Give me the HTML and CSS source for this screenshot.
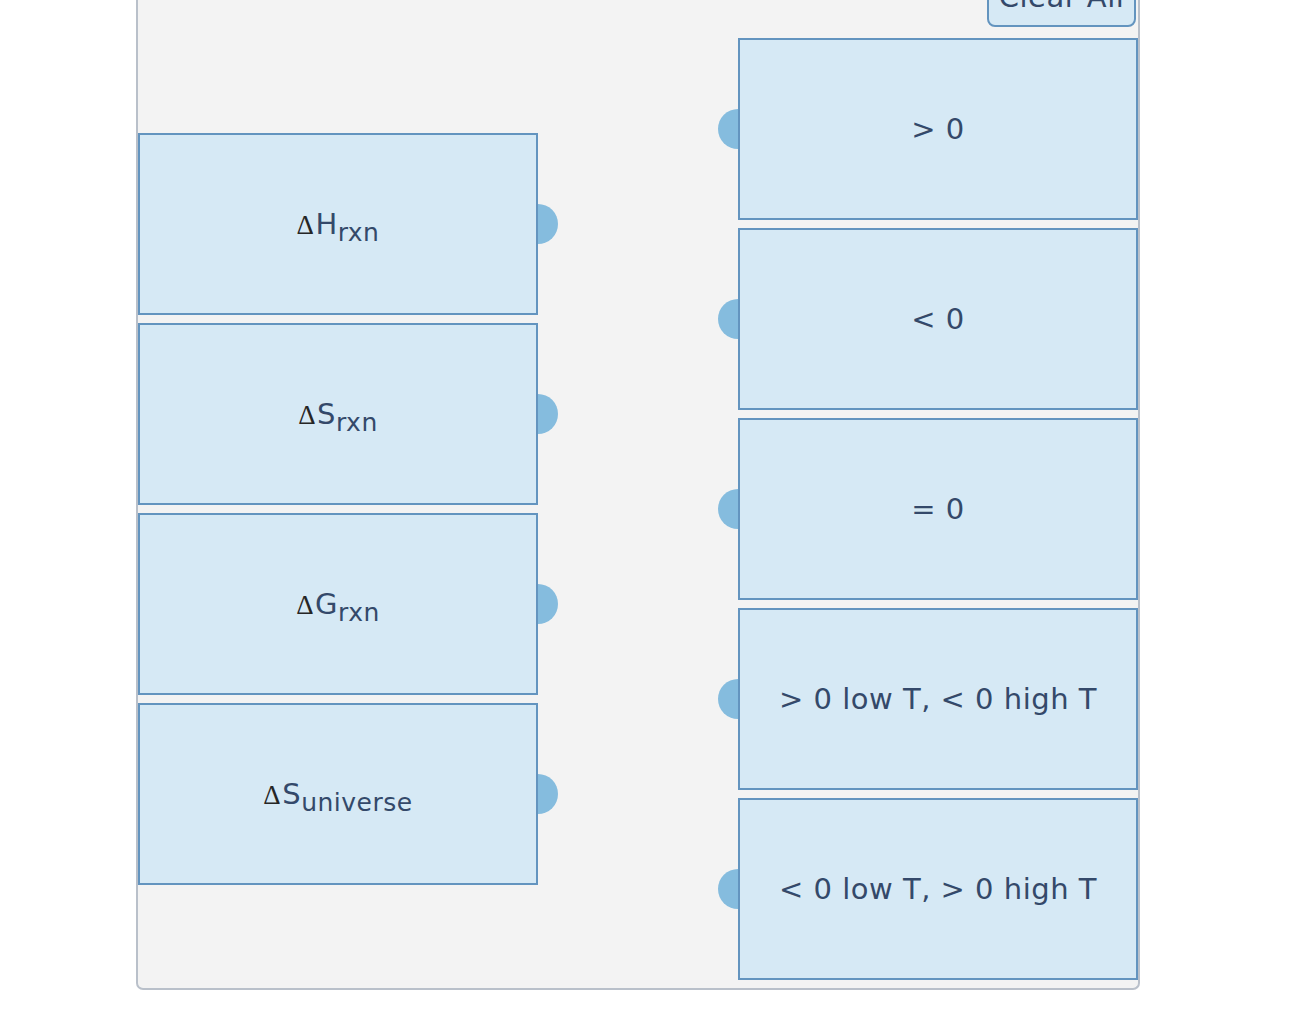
FILE: index.html
```html
<!DOCTYPE html>
<html lang="en">
<head>
  <meta charset="UTF-8">
  <meta name="viewport" content="width=device-width, initial-scale=1.0">
  <title>Match the quantities</title>
  <link rel="stylesheet" href="styles.css">
</head>
<body>
  <div class="panel">
    <div class="panel-head">
      <button class="clear-btn" type="button">Clear All</button>
    </div>
    <div class="match-area">
      <div class="column left">
        <div class="item"><span class="label"><span class="delta">&Delta;</span>H<span class="sub">rxn</span></span></div>
        <div class="item"><span class="label"><span class="delta">&Delta;</span>S<span class="sub">rxn</span></span></div>
        <div class="item"><span class="label"><span class="delta">&Delta;</span>G<span class="sub">rxn</span></span></div>
        <div class="item"><span class="label"><span class="delta">&Delta;</span>S<span class="sub">universe</span></span></div>
      </div>
      <div class="column right">
        <div class="item"><span class="label">&gt; 0</span></div>
        <div class="item"><span class="label">&lt; 0</span></div>
        <div class="item"><span class="label">= 0</span></div>
        <div class="item"><span class="label">&gt; 0 low T, &lt; 0 high T</span></div>
        <div class="item"><span class="label">&lt; 0 low T, &gt; 0 high T</span></div>
      </div>
    </div>
  </div>
</body>
</html>
```

FILE: styles.css
```css
body {
  margin: 0;
  background: #fff;
  font-family: "DejaVu Sans", Verdana, sans-serif;
  color: #34496a;
}
.panel {
  margin-left: 136px;
  width: 1000px;
  background: #f3f3f3;
  border: 2px solid #b9c0ca;
  border-top: none;
  border-radius: 0 0 7px 7px;
  padding-bottom: 8px;
}
.panel-head {
  height: 27px;
  display: flex;
  justify-content: flex-end;
  align-items: flex-end;
  margin-bottom: 11px;
}
.clear-btn {
  height: 60px;
  width: 149px;
  margin-right: 2px;
  flex-shrink: 0;
  background: #d6e9f5;
  border: 2px solid #6394bf;
  border-radius: 8px;
  color: #34496a;
  font-family: inherit;
  font-size: 29px;
  letter-spacing: 0.5px;
  padding: 0;
}
.match-area {
  display: flex;
  justify-content: space-between;
  align-items: flex-start;
}
.column {
  width: 400px;
  display: flex;
  flex-direction: column;
  gap: 8px;
}
.column.left {
  margin-top: 95px;
}
.item {
  position: relative;
  height: 178px;
  background: #d6e9f5;
  border: 2px solid #6394bf;
  display: flex;
  align-items: center;
  justify-content: center;
  font-size: 29px;
  letter-spacing: 0.5px;
}
.label {
  display: block;
  white-space: nowrap;
}
/* connector knobs */
.item::after {
  content: "";
  position: absolute;
  top: 50%;
  width: 20px;
  height: 40px;
  margin-top: -20px;
  background: #85bcde;
}
.left .item::after {
  right: -22px;
  border-radius: 0 20px 20px 0;
}
.right .item::after {
  left: -22px;
  border-radius: 20px 0 0 20px;
}
.delta {
  font-family: "Liberation Serif", "DejaVu Serif", serif;
  color: #262626;
  font-size: 27px;
  margin-right: 1px;
}
.sub {
  font-size: 25px;
  position: relative;
  top: 7px;
}
```
